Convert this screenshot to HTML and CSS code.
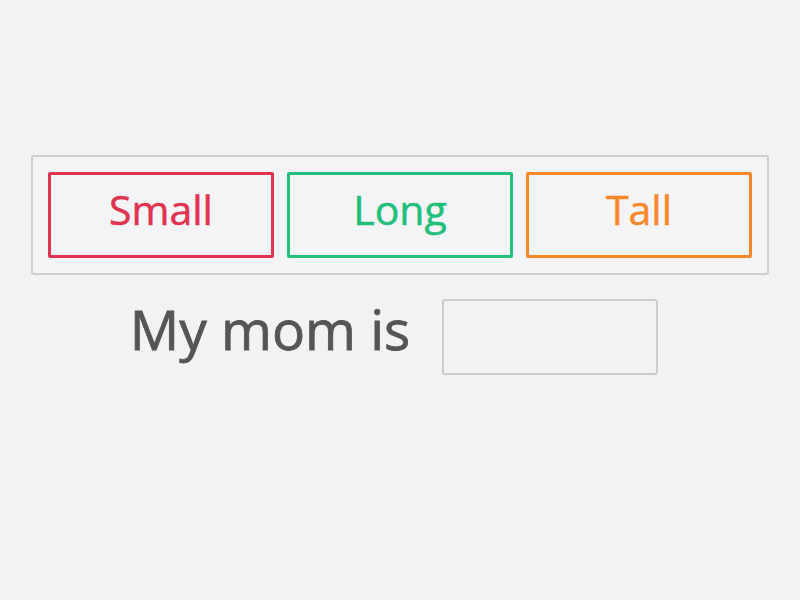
FILE: index.html
```html
<!DOCTYPE html>
<html>
<head>
<meta charset="utf-8">
<link rel="stylesheet" href="styles.css">
</head>
<body>
<div class="page">
  <div class="options">
    <div class="card red">Small</div>
    <div class="card green">Long</div>
    <div class="card orange">Tall</div>
  </div>
  <div class="sentence">
    <span class="text">My mom is</span>
    <div class="blank"></div>
  </div>
</div>
</body>
</html>
```
FILE: styles.css
```css
html, body {
  margin: 0;
  padding: 0;
  background: #f3f2f3;
  width: 800px;
  height: 600px;
  overflow: hidden;
  font-family: "Open Sans", "DejaVu Sans", sans-serif;
}
.page {
  padding-top: 155px;
  display: flex;
  flex-direction: column;
  align-items: center;
}
.options {
  width: 738px;
  box-sizing: border-box;
  border: 2px solid #cfcfcf;
  border-radius: 3px;
  padding: 15px;
  display: flex;
  gap: 13px;
  background: #f4f4f6;
}
.card {
  width: 226px;
  height: 86px;
  box-sizing: border-box;
  border: 3px solid;
  border-radius: 2px;
  display: flex;
  align-items: center;
  justify-content: center;
  font-size: 41px;
  line-height: 1;
  padding-bottom: 12px;
  -webkit-text-stroke: 0.5px currentColor;
}
.red { color: #e0334f; border-color: #e0334f; }
.green { color: #22bf7b; border-color: #22bf7b; }
.orange { color: #f7882a; border-color: #f7882a; }
.sentence {
  margin-top: 24px;
  display: flex;
  align-items: center;
  gap: 32px;
  margin-left: -12px;
}
.text {
  font-size: 55px;
  line-height: 1;
  color: #555555;
  margin-bottom: 18px;
  -webkit-text-stroke: 0.8px currentColor;
}
.blank {
  width: 216px;
  height: 76px;
  box-sizing: border-box;
  border: 2px solid #cccccc;
  border-radius: 3px;
}
```
